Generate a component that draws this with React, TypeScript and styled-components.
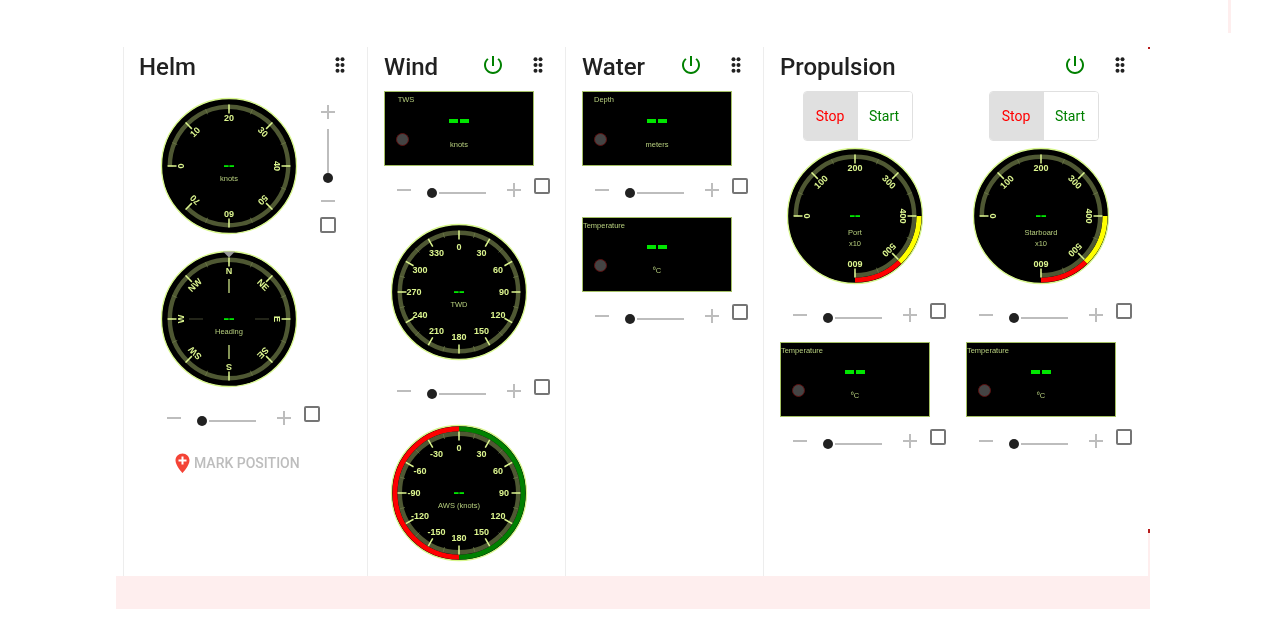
import React from "react";
import styled, { createGlobalStyle } from "styled-components";

const Global = createGlobalStyle`
  html, body { margin: 0; padding: 0; background: #fff; }
  body { font-family: Roboto, "Liberation Sans", sans-serif; color: #212121; overflow: hidden; }
`;

const Page = styled.div`
  width: 1280px;
  height: 640px;
  padding: 47px 0 0 116px;
  box-sizing: border-box;
  position: relative;
  will-change: transform;
`;

const CornerStrip = styled.div`
  position: absolute;
  left: 1228px;
  top: 0;
  width: 3px;
  height: 33px;
  background: #feeeee;
`;

const Mark = styled.div<{ $top: number; $h: number }>`
  position: absolute;
  left: 1148px;
  top: ${(p) => p.$top}px;
  width: 2px;
  height: ${(p) => p.$h}px;
  background: #b71c1c;
`;

const Board = styled.div`
  display: flex;
  width: 1034px;
  height: 529px;
  padding-left: 7px;
  box-sizing: border-box;
`;

const Column = styled.section<{ $w: number; $pl?: number }>`
  width: ${(p) => p.$w}px;
  flex: none;
  box-sizing: border-box;
  border-left: 1px solid #ededed;
  padding-left: ${(p) => p.$pl ?? 16}px;
`;

const LastEdge = styled.div`
  width: 2px;
  flex: none;
  margin-top: 486px;
  background: #feeeee;
`;

const Header = styled.header<{ $pr?: number }>`
  display: flex;
  align-items: flex-start;
  height: 44px;
  padding-right: ${(p) => p.$pr ?? 15}px;
`;

const Title = styled.h2`
  flex: 1;
  margin: 0;
  font: 500 24px/40px Roboto, sans-serif;
  color: #212121;
`;

const HeadIcon = styled.svg<{ $color: string; $gap?: number }>`
  width: 24px;
  height: 24px;
  flex: none;
  fill: ${(p) => p.$color};
  margin: 6px 0 0 ${(p) => p.$gap ?? 0}px;
`;

const Body = styled.div`
  display: flex;
  flex-direction: column;
`;

const HelmBody = styled.div`
  display: flex;
  flex-direction: column;
  padding-left: 15px;
`;

const Block = styled.div`
  width: 170px;
  flex: none;
`;

const SplitRow = styled.div`
  display: flex;
`;

const Half = styled.div`
  width: 186px;
  flex: none;
`;

const TopGaugeRow = styled.div`
  display: flex;
  height: 153px;
`;

const Instrument = styled.svg<{ $h: number }>`
  display: block;
  width: 150px;
  height: ${(p) => p.$h}px;
  flex: none;
`;

const ControlRow = styled.div`
  display: flex;
  align-items: flex-start;
  height: 51px;
  padding-left: 13px;
`;

const Sign = styled.div<{ $plus?: boolean }>`
  position: relative;
  width: 14px;
  height: 14px;
  flex: none;
  &::before {
    content: "";
    position: absolute;
    left: 0;
    right: 0;
    top: 6px;
    height: 2px;
    background: #bdbdbd;
  }
  &::after {
    content: ${(p) => (p.$plus ? '""' : "none")};
    position: absolute;
    top: 0;
    bottom: 0;
    left: 6px;
    width: 2px;
    background: #bdbdbd;
  }
`;

const RowSign = styled(Sign)`
  margin-top: 17px;
`;

const Track = styled.div`
  display: flex;
  align-items: center;
  gap: 2px;
  width: 59px;
  height: 10px;
  margin: 22px 21px 0 16px;
  flex: none;
`;

const Thumb = styled.div`
  width: 10px;
  height: 10px;
  border-radius: 50%;
  background: #212121;
  flex: none;
`;

const TrackLine = styled.div`
  flex: 1;
  height: 2px;
  background: #bdbdbd;
`;

const Check = styled.div<{ $mt?: number }>`
  width: 16px;
  height: 16px;
  box-sizing: border-box;
  border: 2px solid #757575;
  border-radius: 2px;
  flex: none;
  margin-top: ${(p) => p.$mt ?? 0}px;
  background: #fff;
`;

const RowCheck = styled(Check)`
  margin-top: 12px;
  margin-left: 13px;
`;

const VerticalControls = styled.div`
  display: flex;
  flex-direction: column;
  align-items: flex-start;
  margin-left: 16px;
  padding-top: 14px;
`;

const VSign = styled(Sign)`
  margin-left: 1px;
`;

const VTrack = styled.div`
  display: flex;
  flex-direction: column;
  align-items: center;
  width: 10px;
  margin: 10px 0 11px 3px;
`;

const VLine = styled.div`
  width: 2px;
  height: 44px;
  background: #bdbdbd;
`;

const MarkButton = styled.button`
  display: flex;
  align-items: center;
  gap: 3px;
  margin: 6px 0 0 20px;
  padding: 0;
  border: 0;
  background: none;
  font: 500 14px/24px Roboto, sans-serif;
  color: #bdbdbd;
`;

const PinIcon = styled.svg`
  width: 17px;
  height: 24px;
  flex: none;
`;

const Toggle = styled.div`
  display: flex;
  width: 110px;
  height: 50px;
  margin-left: 23px;
  box-sizing: border-box;
  border: 1px solid #e0e0e0;
  border-radius: 4px;
  overflow: hidden;
`;

const ToggleItem = styled.div<{ $color: string; $on?: boolean }>`
  flex: 1;
  display: flex;
  align-items: center;
  justify-content: center;
  padding-right: 2px;
  font: 400 14px Roboto, sans-serif;
  color: ${(p) => p.$color};
  background: ${(p) => (p.$on ? "#e0e0e0" : "#fff")};
`;

const Footer = styled.div`
  width: 1034px;
  height: 33px;
  background: #feeeee;
`;

const POWER =
  "M13 3h-2v10h2V3zm4.83 2.17l-1.42 1.42C17.99 7.86 19 9.81 19 12c0 3.87-3.13 7-7 7s-7-3.13-7-7c0-2.19 1.01-4.14 2.58-5.42L6.17 5.17C4.23 6.82 3 9.26 3 12c0 4.97 4.03 9 9 9s9-4.03 9-9c0-2.74-1.23-5.18-3.17-6.83z";

const Power = () => (
  <HeadIcon $color="#008000" viewBox="0 0 24 24">
    <path d={POWER} />
  </HeadIcon>
);

const Grip = ({ gap }: { gap: number }) => (
  <HeadIcon $color="#212121" $gap={gap} viewBox="0 0 24 24">
    {[9.5, 14.5].map((x) =>
      [6.3, 12, 17.7].map((y) => <circle key={`${x}-${y}`} cx={x} cy={y} r={2} />)
    )}
  </HeadIcon>
);

const LIGHT = "#d8f78e";
const TEXT = "#dcf58f";
const LABEL = "#b4cc7c";
const BAND = "#4f5833";
const GREEN = "#00e600";
const FACE = "'Liberation Sans', Arial, sans-serif";

const polar = (cx: number, cy: number, r: number, deg: number) => {
  const a = ((deg - 90) * Math.PI) / 180;
  return [cx + r * Math.cos(a), cy + r * Math.sin(a)];
};

const arc = (cx: number, cy: number, r: number, from: number, to: number) => {
  const [x1, y1] = polar(cx, cy, r, from);
  const [x2, y2] = polar(cx, cy, r, to);
  const sweep = ((to - from) % 360 + 360) % 360;
  return `M${x1} ${y1}A${r} ${r} 0 ${sweep > 180 ? 1 : 0} 1 ${x2} ${y2}`;
};

type Zone = { from: number; to: number; color: string };

type GaugeProps = {
  labels: { deg: number; text: string }[];
  titles: string[];
  rotate?: boolean;
  sweep?: [number, number];
  zones?: Zone[];
  compass?: boolean;
  minor?: number;
  titleY?: number;
};

const C = 75;

const Gauge = ({ labels, titles, rotate, sweep, zones = [], compass, minor = 22.5, titleY = 87.5 }: GaugeProps) => {
  const minors: number[] = [];
  for (let d = 0; d < 360; d += minor) {
    if (sweep) {
      const rel = (d - sweep[0] + 360) % 360;
      const len = (sweep[1] - sweep[0] + 360) % 360;
      if (rel > len) continue;
    }
    minors.push(d);
  }
  return (
    <Instrument $h={150} viewBox="0 0 150 150">
      <circle cx={C} cy={C} r={67.5} fill="#000" stroke={LIGHT} strokeWidth={1.3} />
      {zones.map((z) => (
        <path key={z.from} d={arc(C, C, 64, z.from, z.to)} fill="none" stroke={z.color} strokeWidth={5} />
      ))}
      {sweep ? (
        <path d={arc(C, C, 59.2, sweep[0], sweep[1])} fill="none" stroke={BAND} strokeWidth={4.4} />
      ) : (
        <circle cx={C} cy={C} r={59.2} fill="none" stroke={BAND} strokeWidth={4.4} />
      )}
      {minors.map((d) => {
        const [x1, y1] = polar(C, C, 61.4, d);
        const [x2, y2] = polar(C, C, 56, d);
        return <line key={d} x1={x1} y1={y1} x2={x2} y2={y2} stroke="#6b7747" strokeWidth={0.8} />;
      })}
      {labels.map((l) => {
        const [x1, y1] = polar(C, C, 61.4, l.deg);
        const [x2, y2] = polar(C, C, 52.5, l.deg);
        const [tx, ty] = polar(C, C, rotate ? 48 : 45, l.deg);
        return (
          <g key={l.deg}>
            <line x1={x1} y1={y1} x2={x2} y2={y2} stroke={TEXT} strokeWidth={1.5} />
            <text
              x={tx}
              y={ty}
              fill={TEXT}
              fontFamily={FACE}
              fontSize={9}
              fontWeight={700}
              textAnchor="middle"
              dominantBaseline="central"
              transform={rotate ? `rotate(${l.deg} ${tx} ${ty})` : undefined}
            >
              {l.text}
            </text>
          </g>
        );
      })}
      {compass && (
        <>
          <path d="M69 7.5h12l-6 6z" fill="#999" />
          <line x1={C} y1={35} x2={C} y2={49} stroke={TEXT} strokeWidth={1.2} />
          <line x1={C} y1={101} x2={C} y2={115} stroke={TEXT} strokeWidth={1.2} />
          <line x1={35} y1={C} x2={49} y2={C} stroke="#3b3f2a" strokeWidth={1.2} />
          <line x1={101} y1={C} x2={115} y2={C} stroke="#3b3f2a" strokeWidth={1.2} />
        </>
      )}
      <rect x={70} y={74.2} width={4.6} height={1.8} fill={GREEN} />
      <rect x={75.4} y={74.2} width={4.6} height={1.8} fill={GREEN} />
      {titles.map((t, i) => (
        <text
          key={t}
          x={C}
          y={titleY + i * 11}
          fill={LABEL}
          fontFamily={FACE}
          fontSize={7.5}
          textAnchor="middle"
          dominantBaseline="central"
        >
          {t}
        </text>
      ))}
    </Instrument>
  );
};

const Display = ({ title, unit }: { title: string; unit: string }) => (
  <Instrument $h={75} viewBox="0 0 150 75">
    <rect x={0.5} y={0.5} width={149} height={74} fill="#000" stroke="#a4c064" />
    <text x={22} y={8.5} fill={LABEL} fontFamily={FACE} fontSize={7.5} textAnchor="middle" dominantBaseline="central">
      {title}
    </text>
    <rect x={65} y={28} width={9} height={4} fill={GREEN} />
    <rect x={76} y={28} width={9} height={4} fill={GREEN} />
    <circle cx={18.5} cy={48.5} r={6} fill="#444" stroke="#5c1010" />
    <text x={75} y={53} fill={LABEL} fontFamily={FACE} fontSize={7.5} textAnchor="middle" dominantBaseline="central">
      {unit}
    </text>
  </Instrument>
);

const Controls = () => (
  <ControlRow>
    <RowSign />
    <Track>
      <Thumb />
      <TrackLine />
    </Track>
    <RowSign $plus />
    <RowCheck />
  </ControlRow>
);

const series = (values: (string | number)[], start: number, step: number) =>
  values.map((v, i) => ({ deg: (start + i * step) % 360, text: String(v) }));

const helmLabels = series([0, 10, 20, 30, 40, 50, 60, 70], 270, 45);
const compassLabels = series(["N", "NE", "E", "SE", "S", "SW", "W", "NW"], 0, 45);
const twd = series([0, 30, 60, 90, 120, 150, 180, 210, 240, 270, 300, 330], 0, 30);
const aws = series([0, 30, 60, 90, 120, 150, 180, -150, -120, -90, -60, -30], 0, 30);
const rpm = series([0, 100, 200, 300, 400, 500, 600], 270, 45);

const engineZones: Zone[] = [
  { from: 90, to: 136, color: "#ffff00" },
  { from: 136, to: 180, color: "#ff0000" },
];

const windZones: Zone[] = [
  { from: 0, to: 180, color: "#008000" },
  { from: 180, to: 360, color: "#ff0000" },
];

const Engine = ({ name }: { name: string }) => (
  <Half>
    <Toggle>
      <ToggleItem $color="#ff0000" $on>Stop</ToggleItem>
      <ToggleItem $color="#008000">Start</ToggleItem>
    </Toggle>
    <Block>
      <Gauge labels={rpm} titles={[name, "x10"]} rotate sweep={[270, 180]} zones={engineZones} titleY={91} />
      <Controls />
    </Block>
    <Block>
      <Display title="Temperature" unit="⁰C" />
      <Controls />
    </Block>
  </Half>
);

export default function App() {
  return (
    <Page>
      <Global />
      <CornerStrip />
      <Mark $top={47} $h={2} />
      <Mark $top={529} $h={4} />
      <Board>
        <Column $w={244} $pl={15}>
          <Header>
            <Title>Helm</Title>
            <Grip gap={0} />
          </Header>
          <HelmBody>
            <TopGaugeRow>
              <Gauge labels={helmLabels} titles={["knots"]} rotate sweep={[270, 225]} />
              <VerticalControls>
                <VSign $plus />
                <VTrack>
                  <VLine />
                  <Thumb />
                </VTrack>
                <VSign />
                <Check $mt={9} />
              </VerticalControls>
            </TopGaugeRow>
            <Block>
              <Gauge labels={compassLabels} titles={["Heading"]} rotate compass />
              <Controls />
            </Block>
            <MarkButton>
              <PinIcon viewBox="0 0 17 24">
                <path d="M8.5 2.5C4.6 2.5 1.5 5.6 1.5 9.4c0 4.9 7 12.6 7 12.6s7-7.7 7-12.6c0-3.8-3.1-6.9-7-6.9z" fill="#f44336" />
                <path d="M7.5 5.5h2v3h3v2h-3v3h-2v-3h-3v-2h3z" fill="#fff" />
              </PinIcon>
              MARK POSITION
            </MarkButton>
          </HelmBody>
        </Column>
        <Column $w={198}>
          <Header>
            <Title>Wind</Title>
            <Power />
            <Grip gap={21} />
          </Header>
          <Body>
            <Block>
              <Display title="TWS" unit="knots" />
              <Controls />
            </Block>
            <Block>
              <Gauge labels={twd} titles={["TWD"]} minor={15} />
              <Controls />
            </Block>
            <Block>
              <Gauge labels={aws} titles={["AWS (knots)"]} minor={15} zones={windZones} />
            </Block>
          </Body>
        </Column>
        <Column $w={198}>
          <Header>
            <Title>Water</Title>
            <Power />
            <Grip gap={21} />
          </Header>
          <Body>
            <Block>
              <Display title="Depth" unit="meters" />
              <Controls />
            </Block>
            <Block>
              <Display title="Temperature" unit="⁰C" />
              <Controls />
            </Block>
          </Body>
        </Column>
        <Column $w={385}>
          <Header $pr={16}>
            <Title>Propulsion</Title>
            <Power />
            <Grip gap={21} />
          </Header>
          <SplitRow>
            <Engine name="Port" />
            <Engine name="Starboard" />
          </SplitRow>
        </Column>
        <LastEdge />
      </Board>
      <Footer />
    </Page>
  );
}
